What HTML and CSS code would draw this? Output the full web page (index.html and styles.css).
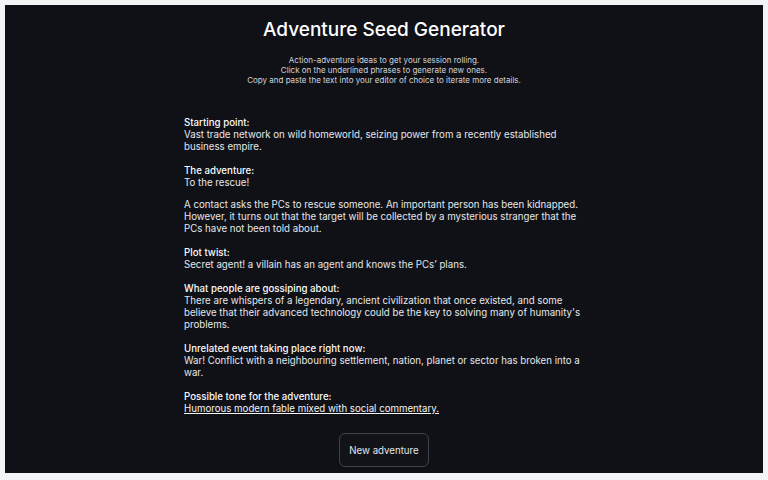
FILE: index.html
```html
<!DOCTYPE html>
<html lang="en">
<head>
<meta charset="utf-8">
<title>Adventure Seed Generator</title>
<link rel="stylesheet" href="styles.css">
</head>
<body>
<main class="panel">
  <h1 class="title">Adventure Seed Generator</h1>
  <p class="intro">Action-adventure ideas to get your session rolling.<br>Click on the underlined phrases to generate new ones.<br>Copy and paste the text into your editor of choice to iterate more details.</p>
  <section class="seed">
    <div class="block">
      <h2 class="label">Starting point:</h2>
      <p class="text">Vast trade network on wild homeworld, seizing power from a recently established business empire.</p>
    </div>
    <div class="block">
      <h2 class="label">The adventure:</h2>
      <p class="text">To the rescue!</p>
      <p class="text spaced">A contact asks the PCs to rescue someone. An important person has been kidnapped. However, it turns out that the target will be collected by a mysterious stranger that the PCs have not been told about.</p>
    </div>
    <div class="block">
      <h2 class="label">Plot twist:</h2>
      <p class="text">Secret agent! a villain has an agent and knows the PCs’ plans.</p>
    </div>
    <div class="block">
      <h2 class="label">What people are gossiping about:</h2>
      <p class="text">There are whispers of a legendary, ancient civilization that once existed, and some believe that their advanced technology could be the key to solving many of humanity's problems.</p>
    </div>
    <div class="block">
      <h2 class="label">Unrelated event taking place right now:</h2>
      <p class="text">War! Conflict with a neighbouring settlement, nation, planet or sector has broken into a war.</p>
    </div>
    <div class="block">
      <h2 class="label">Possible tone for the adventure:</h2>
      <p class="text"><a class="phrase" href="#">Humorous modern fable mixed with social commentary.</a></p>
    </div>
  </section>
  <div class="actions">
    <button class="btn" type="button">New adventure</button>
  </div>
</main>
</body>
</html>
```

FILE: styles.css
```css
* { box-sizing: border-box; }
html, body { margin: 0; padding: 0; }
body {
  background: #f3f4f6;
  padding: 5px;
  font-family: Inter, "Noto Sans", sans-serif;
}
.panel {
  background: #0f1117;
  height: 468px;
  padding-top: 11px;
  color: #e5e7eb;
}
.title {
  margin: 0;
  text-align: center;
  font-size: 19px;
  line-height: 28px;
  font-weight: 500;
  color: #ffffff;
}
.intro {
  margin: 11px 0 0;
  text-align: center;
  font-size: 8px;
  line-height: 10px;
  color: #d1d5db;
}
.seed {
  width: 400px;
  margin: 32px auto 0;
}
.block { margin-bottom: 12px; }
.block:last-child { margin-bottom: 0; }
.label {
  margin: 0;
  font-size: 9.7px;
  line-height: 12px;
  font-weight: 500;
  color: #f9fafb;
}
.text {
  margin: 0;
  font-size: 9.7px;
  line-height: 12px;
  color: #e5e7eb;
}
.text.spaced { margin-top: 10px; }
.phrase {
  color: #f3f4f6;
  text-decoration: underline;
  font-weight: 400;
}
.actions {
  display: flex;
  justify-content: center;
  margin-top: 18px;
}
.btn {
  width: 90px;
  height: 34px;
  background: #111318;
  border: 1px solid #3f434b;
  border-radius: 6px;
  color: #e5e7eb;
  font-family: inherit;
  font-size: 9.7px;
}
```
